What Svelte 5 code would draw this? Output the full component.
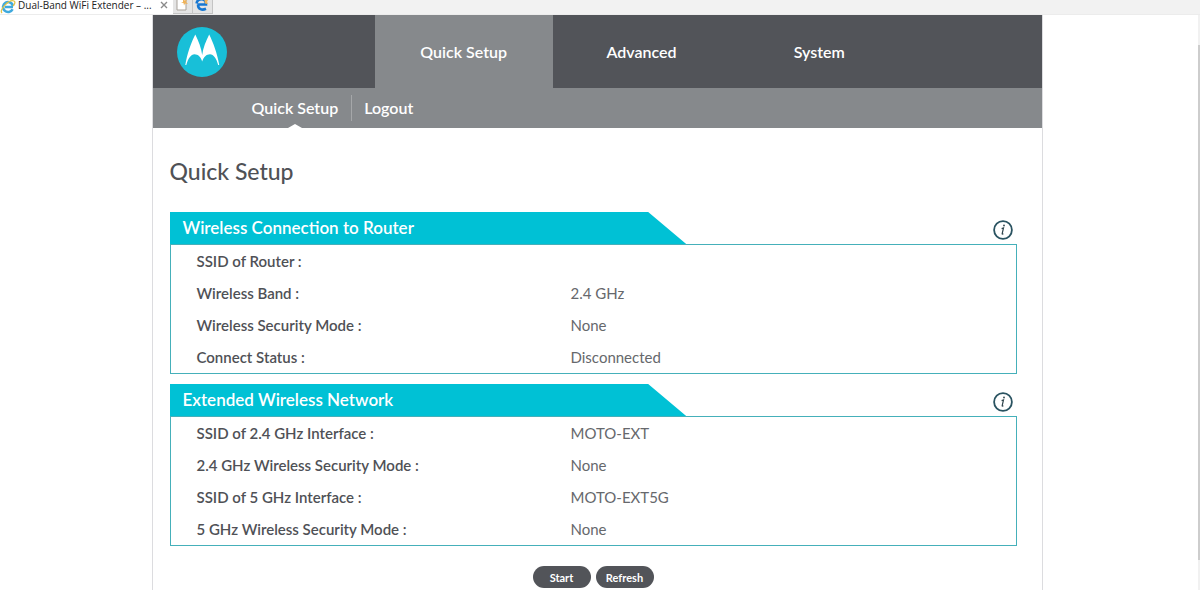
<script lang="ts">
  type Row = { label: string; value: string };
  type Panel = { title: string; rows: Row[] };

  const tabs = ["Quick Setup", "Advanced", "System"];
  const links = ["Quick Setup", "Logout"];

  const panels: Panel[] = [
    {
      title: "Wireless Connection to Router",
      rows: [
        { label: "SSID of Router :", value: "" },
        { label: "Wireless Band :", value: "2.4 GHz" },
        { label: "Wireless Security Mode :", value: "None" },
        { label: "Connect Status :", value: "Disconnected" },
      ],
    },
    {
      title: "Extended Wireless Network",
      rows: [
        { label: "SSID of 2.4 GHz Interface :", value: "MOTO-EXT" },
        { label: "2.4 GHz Wireless Security Mode :", value: "None" },
        { label: "SSID of 5 GHz Interface :", value: "MOTO-EXT5G" },
        { label: "5 GHz Wireless Security Mode :", value: "None" },
      ],
    },
  ];

  let activeTab = $state("Quick Setup");
  let activeLink = $state("Quick Setup");
</script>

<div class="browser">
  <span class="tab">
    <svg class="ie" viewBox="0 0 16 14" aria-hidden="true">
      <path d="M13 7H5M12.600 9.200A5 5 0 1 1 13 6" fill="none" stroke="#3fa9dd" stroke-width="2.600" />
      <path d="M2 13C-1 10 9-1 14 1c2 1 0 4-1 5" fill="none" stroke="#e3c447" stroke-width="1.300" />
    </svg>
    <span class="tab-title">Dual-Band WiFi Extender – ...</span>
    <button class="close" aria-label="Close tab">
      <svg viewBox="0 0 8 8"><path d="M1 1l6 6M7 1L1 7" stroke="#8a8a8a" stroke-width="1.400" /></svg>
    </button>
  </span>
  <button class="tool" aria-label="New tab">
    <svg viewBox="0 0 18 14">
      <path d="M4-2h9v12H4z" fill="#fff" stroke="#a7a19a" />
      <path d="M10-2l1.500 2.500L14 0l-1 2 2 2-3-.5-1 2-.5-2.500L8 3l2-1z" fill="#efb35a" />
    </svg>
  </button>
  <button class="tool" aria-label="Open Edge">
    <svg viewBox="0 0 18 14">
      <path d="M4.500 4.500h8.500C13 1 11-.8 8.500-.8 6-.8 4 1 3.500 3.500M5 4.500C5 9.500 9 10.500 13 8.800" fill="none" stroke="#1677d2" stroke-width="2.600" />
      <path d="M11-2l1.500 2L15 0l-1 2 1 2-3-.5z" fill="#efb35a" />
    </svg>
  </button>
</div>

<div class="viewport">
  <div class="page">
    <header>
      <a class="logo" href="#home" aria-label="Motorola">
        <svg viewBox="0 0 50 50">
          <circle cx="25" cy="25" r="25" fill="#18bfd8" />
          <path
            d="M18.300 7.500C21.500 14 24.300 21 25.200 28 26 21 29 14 32.200 7.500 36 15 40.500 27 42.200 38H41.200C39.500 31.500 36.500 27.200 33 27.200 29.500 27.200 26.500 30 25.200 34.500 24 30 21 27.200 17.500 27.200 14 27.200 11 31.500 9.300 38H8.300C10 27 14 16 18.300 7.500z"
            fill="#fff"
          />
        </svg>
      </a>
      <nav class="tabs">
        {#each tabs as tab}
          <a href="#{tab}" class:active={tab === activeTab} onclick={() => (activeTab = tab)}>{tab}</a>
        {/each}
      </nav>
    </header>
    <nav class="links">
      {#each links as link}
        <a href="#{link}" class:active={link === activeLink} onclick={() => (activeLink = link)}>{link}</a>
      {/each}
    </nav>

    <main>
      <h1>Quick Setup</h1>
      {#each panels as panel}
        <section>
          <div class="panel-head">
            <h2>{panel.title}</h2>
            <button class="info" aria-label="About {panel.title}">
              <svg viewBox="0 0 20 20">
                <circle cx="10" cy="10" r="8.900" fill="none" stroke="#2a5361" stroke-width="1.800" />
                <path d="M8.600 8.600l1.900-.6-1.300 5.600q-.2 1 1.200.2" fill="none" stroke="#2f444c" stroke-width="1.200" />
                <circle cx="11" cy="5.500" r="0.900" fill="#2f444c" />
              </svg>
            </button>
          </div>
          <div class="panel-body">
            <table>
              <tbody>
                {#each panel.rows as row}
                  <tr>
                    <th scope="row">{row.label}</th>
                    <td>{row.value}</td>
                  </tr>
                {/each}
              </tbody>
            </table>
          </div>
        </section>
      {/each}
      <div class="actions">
        <button>Start</button>
        <button>Refresh</button>
      </div>
    </main>
  </div>
  <div class="scrollbar"><div class="thumb"></div></div>
</div>

<style>
  :global(body) {
    margin: 0;
    background: #fff;
    font-family: Lato, "Liberation Sans", sans-serif;
    color: #4f5156;
  }
  a {
    color: #fff;
    text-decoration: none;
  }
  button {
    padding: 0;
    border: 0;
    background: none;
    font-family: inherit;
    cursor: pointer;
  }
  svg {
    display: block;
  }

  .browser {
    display: flex;
    height: 14px;
    background: #f2f2f2;
    border-bottom: 1px solid #ececec;
  }
  .tab {
    box-sizing: border-box;
    display: flex;
    align-items: flex-start;
    width: 173px;
    background: #fff;
    font: 10px/11px "Open Sans", "Noto Sans", sans-serif;
    color: #222;
  }
  .ie {
    flex: none;
    width: 16px;
    height: 14px;
    margin-right: 2px;
  }
  .tab-title {
    flex: 1;
    white-space: nowrap;
  }
  .close {
    margin: 1px 5px 0 0;
  }
  .close svg {
    width: 8px;
    height: 8px;
  }
  .tool {
    box-sizing: border-box;
    width: 20px;
    height: 14px;
    background: #e4e4e4;
    border: solid #c4c4c4;
    border-width: 0 1px 1px 0;
  }
  .tool svg {
    width: 18px;
    height: 14px;
  }

  .viewport {
    display: flex;
  }
  .page {
    box-sizing: border-box;
    width: 75%;
    max-width: 891px;
    min-width: 720px;
    margin: 0 auto;
    border: solid #dcdcdf;
    border-width: 0 1px;
  }
  .scrollbar {
    box-sizing: border-box;
    width: 6px;
    padding: 30px 0;
    border-left: 4px solid #fff;
    background: #f1f1f1;
  }
  .thumb {
    height: 100%;
    background: #cdcdcd;
  }

  header {
    display: flex;
    height: 73px;
    background: #525459;
  }
  .logo {
    display: flex;
    align-items: center;
    width: 25%;
  }
  .logo svg {
    width: 50px;
    height: 50px;
    margin-left: 24px;
  }
  .tabs {
    display: flex;
    width: 60%;
  }
  .tabs a {
    flex: 1;
    display: flex;
    align-items: center;
    justify-content: center;
    font-size: 16px;
    font-weight: 600;
  }
  .tabs .active {
    background: #86898c;
  }

  .links {
    display: flex;
    align-items: center;
    height: 40px;
    padding-left: 86px;
    background: #86898c;
    font-size: 16px;
    font-weight: 600;
    line-height: 26px;
  }
  .links a {
    position: relative;
    padding: 0 13px;
  }
  .links a + a {
    padding-left: 12px;
    border-left: 1px solid #a5a7a9;
  }
  /* pointer under the current page */
  .links .active::after {
    content: "";
    position: absolute;
    left: 50%;
    bottom: -7px;
    margin-left: -7px;
    border: solid transparent;
    border-width: 0 7px 4px;
    border-bottom-color: #fff;
  }

  main {
    padding: 28px 25px 2px 17px;
  }
  h1 {
    margin: 0 0 26px;
    font-size: 23px;
    font-weight: 500;
    line-height: 30px;
  }
  section {
    margin-bottom: 10px;
  }
  .panel-head {
    display: flex;
    justify-content: space-between;
    align-items: flex-end;
  }
  h2 {
    box-sizing: border-box;
    width: 61%;
    margin: 0;
    padding-left: 13px;
    font-size: 17px;
    font-weight: 600;
    line-height: 32px;
    color: #fff;
    background: #00c1d5;
    clip-path: polygon(0 0, calc(100% - 38px) 0, 100% 100%, 0 100%);
  }
  .info {
    margin: 0 4px 4px 0;
  }
  .info svg {
    width: 20px;
    height: 20px;
  }
  .panel-body {
    border: 1px solid #45b0ba;
    padding-left: 26px;
  }
  table {
    width: 100%;
    table-layout: fixed;
    border-collapse: collapse;
    font-size: 15px;
  }
  th,
  td {
    height: 32px;
    padding: 0;
    text-align: left;
  }
  th {
    width: 374px;
    font-weight: 600;
  }
  td {
    font-weight: 400;
    color: #66686c;
  }
  .actions {
    display: flex;
    justify-content: center;
    gap: 5px;
    padding-top: 10px;
  }
  .actions button {
    width: 58px;
    height: 22px;
    border-radius: 11px;
    background: #525459;
    color: #fff;
    font-size: 11px;
    font-weight: 700;
  }
</style>
